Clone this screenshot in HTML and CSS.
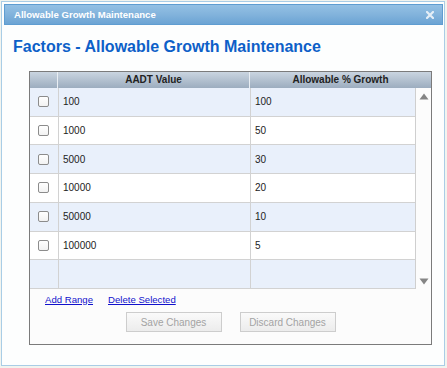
FILE: index.html
```html
<!DOCTYPE html>
<html lang="en">
<head>
    <meta charset="UTF-8">
    <title>Allowable Growth Maintenance</title>
    <link rel="stylesheet" href="styles.css">
</head>
<body>
    <div class="dialog">
        <div class="titlebar">
            <span class="title">Allowable Growth Maintenance</span>
            <svg class="close" width="8" height="8" viewBox="0 0 8 8">
                <path d="M1 1 L7 7 M7 1 L1 7" stroke="#e4eef7" stroke-width="2.2" stroke-linecap="square"/>
            </svg>
        </div>
        <div class="content">
            <h1>Factors - Allowable Growth Maintenance</h1>
            <div class="panel">
                <div class="grid-head">
                    <div class="hcell"></div>
                    <div class="hcell">AADT Value</div>
                    <div class="hcell last">Allowable % Growth</div>
                </div>
                <div class="grid-body">
                    <div class="rows">
                        <div class="row alt"><div class="cell chk"><span class="box"></span></div><div class="cell">100</div><div class="cell">100</div></div>
                        <div class="row"><div class="cell chk"><span class="box"></span></div><div class="cell">1000</div><div class="cell">50</div></div>
                        <div class="row alt"><div class="cell chk"><span class="box"></span></div><div class="cell">5000</div><div class="cell">30</div></div>
                        <div class="row"><div class="cell chk"><span class="box"></span></div><div class="cell">10000</div><div class="cell">20</div></div>
                        <div class="row alt"><div class="cell chk"><span class="box"></span></div><div class="cell">50000</div><div class="cell">10</div></div>
                        <div class="row"><div class="cell chk"><span class="box"></span></div><div class="cell">100000</div><div class="cell">5</div></div>
                        <div class="row alt"><div class="cell chk"></div><div class="cell"></div><div class="cell"></div></div>
                    </div>
                    <div class="scroll">
                        <svg width="10" height="7" viewBox="0 0 10 7"><path d="M5 0.5 L9.5 6.5 L0.5 6.5 Z" fill="#858585"/></svg>
                        <svg width="10" height="7" viewBox="0 0 10 7"><path d="M0.5 0.5 L9.5 0.5 L5 6.5 Z" fill="#858585"/></svg>
                    </div>
                </div>
                <div class="links">
                    <a href="#">Add Range</a>
                    <a href="#">Delete Selected</a>
                </div>
                <div class="buttons">
                    <button disabled>Save Changes</button>
                    <button disabled>Discard Changes</button>
                </div>
            </div>
        </div>
    </div>
</body>
</html>
```

FILE: styles.css
```css
body {
    margin: 0;
    background: #f2f4ef;
    font-family: "Liberation Sans", Arial, sans-serif;
}
.dialog {
    margin: 1px 0 0 1px;
    width: 444px;
    height: 365px;
    box-sizing: border-box;
    border: 1px solid #a9cde6;
    background: #fdfefe;
    padding: 2px 1px 2px 2px;
}
/* title bar */
.titlebar {
    height: 21px;
    box-sizing: border-box;
    border: 1px solid #5f9dd1;
    background: linear-gradient(#94c1e4, #82b3dc 50%, #6ca4d4);
    display: flex;
    align-items: center;
    justify-content: space-between;
    padding: 0 8px 0 9px;
}
.title {
    color: #fff;
    font-weight: bold;
    font-size: 9.6px;
}
.close {
    margin-top: 1px;
}
.content {
    padding: 0 0 0 9px;
}
h1 {
    margin: 13px 0 15px 0;
    font-size: 16px;
    line-height: 18px;
    color: #0d60c8;
}
/* grid panel */
.panel {
    margin-left: 16px;
    width: 403px;
    height: 274px;
    box-sizing: border-box;
    border: 1px solid #7b7b7b;
    background: #fcfcfc;
}
.grid-head {
    display: grid;
    grid-template-columns: 28px 192px 1fr;
    height: 16px;
    background: linear-gradient(#cad5e0, #9cadbf);
}
.hcell {
    border-right: 1px solid #e9eef3;
    font-size: 10px;
    font-weight: bold;
    color: #222;
    text-align: center;
    line-height: 16px;
}
.hcell.last {
    border-right: none;
}
.grid-body {
    display: flex;
}
.rows {
    width: 385px;
    border-right: 1px solid #cfcfcf;
}
.row {
    display: grid;
    grid-template-columns: 29px 192px 1fr;
    height: 28.71px;
    box-sizing: border-box;
    border-bottom: 1px solid #d2d2d2;
    background: #fff;
}
.row.alt {
    background: #e9f0fb;
}
.cell {
    border-right: 1px solid #d2d2d2;
    display: flex;
    align-items: center;
    padding-left: 4px;
    font-size: 10px;
    color: #222;
}
.cell:last-child {
    border-right: none;
}
.cell.chk {
    padding: 0 0 0 8px;
}
.box {
    width: 9px;
    height: 9px;
    border: 1px solid #8c8c8c;
    border-radius: 2px;
    background: linear-gradient(#fff, #f2f2f2);
}
.scroll {
    flex: 1;
    display: flex;
    flex-direction: column;
    justify-content: space-between;
    align-items: center;
    padding: 5px 0 4px 0;
    height: 192px;
}
.links {
    height: 20px;
    padding-left: 15px;
    display: flex;
    gap: 15px;
    align-items: center;
}
.links a {
    font-size: 9.6px;
    color: #1111cc;
}
.buttons {
    display: flex;
    justify-content: center;
    gap: 18px;
    margin-top: 3px;
}
.buttons button {
    width: 96px;
    height: 20px;
    border: 1px solid #cdcdcd;
    background: linear-gradient(#fafafa, #ececec);
    color: #a3a3a3;
    font-family: "Liberation Sans", Arial, sans-serif;
    font-size: 10px;
    padding: 0;
}
```
